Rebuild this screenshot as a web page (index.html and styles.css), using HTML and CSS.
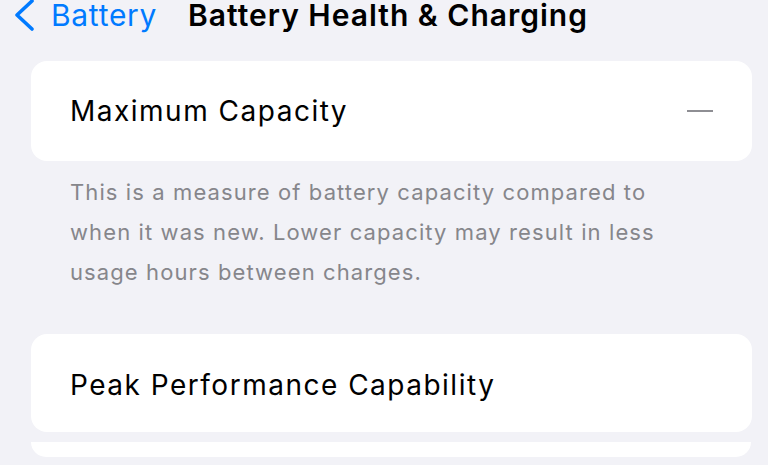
FILE: index.html
```html
<!DOCTYPE html>
<html lang="en">
<head>
    <meta charset="UTF-8">
    <meta name="viewport" content="width=device-width, initial-scale=1.0">
    <title>Battery Health &amp; Charging</title>
    <link rel="stylesheet" href="styles.css">
</head>
<body>
    <header class="navbar">
        <a href="#" class="back">
            <svg class="chevron" width="24" height="32" viewBox="0 0 24 32">
                <path d="M20 2 L5 16 L20 30" fill="none" stroke="#007aff" stroke-width="3.6" stroke-linecap="round" stroke-linejoin="round"/>
            </svg>
            <span>Battery</span>
        </a>
        <h1 class="title">Battery Health &amp; Charging</h1>
    </header>

    <main class="list">
        <div class="card">
            <span class="row-label">Maximum Capacity</span>
            <span class="dash"></span>
        </div>
        <p class="footnote">This is a measure of battery capacity compared to when it was new. Lower capacity may result in less usage hours between charges.</p>

        <div class="card card-short">
            <span class="row-label">Peak Performance Capability</span>
        </div>
        <div class="card-tail"></div>
    </main>
</body>
</html>
```

FILE: styles.css
```css
* {
    margin: 0;
    padding: 0;
    box-sizing: border-box;
}
body {
    background: #f2f2f7;
    color: #000;
    font-family: Inter, "Noto Sans", sans-serif;
    overflow: hidden;
}
.navbar {
    display: flex;
    align-items: center;
    height: 30px;
    padding-left: 12px;
}
.back {
    display: flex;
    align-items: center;
    color: #007aff;
    text-decoration: none;
    font-size: 30px;
    line-height: 30px;
    letter-spacing: 0.7px;
}
.chevron {
    margin-right: 15px;
}
.title {
    margin-left: 31px;
    font-size: 30px;
    line-height: 30px;
    font-weight: 600;
    letter-spacing: 1px;
}
.list {
    padding: 31px 16px 0 31px;
}
.card {
    display: flex;
    align-items: center;
    justify-content: space-between;
    width: 721px;
    height: 100px;
    padding: 0 39px;
    background: #fff;
    border-radius: 16px;
}
.card-short {
    height: 98px;
    padding-top: 3px;
}
.row-label {
    font-size: 28px;
    letter-spacing: 1.5px;
}
.dash {
    width: 26px;
    height: 2px;
    background: #8e8e93;
}
.footnote {
    width: 700px;
    padding: 11px 39px 0;
    font-size: 22px;
    line-height: 40px;
    letter-spacing: 1.1px;
    color: #86868b;
    height: 173px;
}
.card-tail {
    width: 720px;
    height: 15px;
    margin-top: 10px;
    background: #fff;
    border-radius: 0 0 16px 16px;
}
```
